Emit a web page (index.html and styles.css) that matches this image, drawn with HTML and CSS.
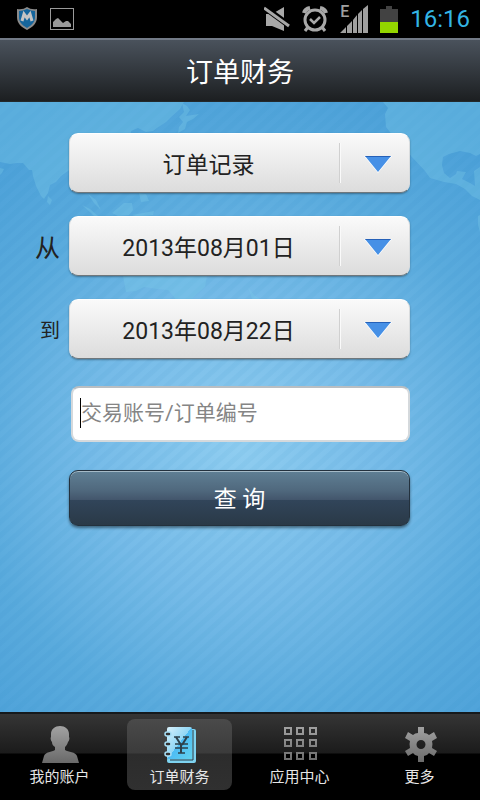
FILE: index.html
```html
<!DOCTYPE html>
<html lang="zh-CN">
<head>
    <meta charset="UTF-8">
    <meta name="viewport" content="width=device-width, initial-scale=1.0">
    <title>订单财务</title>
    <link rel="stylesheet" href="styles.css">
</head>
<body>
    <div class="status-bar">
        <div class="notifications">
            <svg width="22" height="24" viewBox="0 0 22 24">
                <path d="M1 2Q7 3 11 0Q15 3 21 2V10C21 16 17 20 11 23C5 20 1 16 1 10Z" fill="#8b8b8b"/>
                <path d="M3 4Q7 4 11 2Q15 4 19 4V10C19 15 16 18 11 21C6 18 3 15 3 10Z" fill="#15659c"/>
                <path d="M6 14L8 7L11 11L14 7L16 14" fill="none" stroke="#c4c4c4" stroke-width="3"/>
            </svg>
            <svg width="24" height="22" viewBox="0 0 24 22">
                <rect x="0.5" y="0.5" width="23" height="21" fill="none" stroke="#9a9a9a"/>
                <path d="M3 19V14L6 11L8 10L10 12L13 15L16 13L18 13L21 16V19Z" fill="#9a9a9a"/>
            </svg>
        </div>
        <div class="indicators">
            <svg width="26" height="26" viewBox="0 0 26 26">
                <path d="M2 8H8L20 1V25L8 20H2Z" fill="#a8a8a8"/>
                <path d="M0 1L26 20" stroke="#000" stroke-width="6"/>
                <path d="M0 2L25 20" stroke="#a8a8a8" stroke-width="3"/>
            </svg>
            <svg width="26" height="26" viewBox="0 0 26 26" fill="none" stroke="#a8a8a8">
                <circle cx="13" cy="14" r="10" stroke-width="3"/>
                <path d="M8 13L12 17L18 11" stroke-width="2.5"/>
                <path d="M2 7Q3 3 8 2M24 7Q23 3 18 2" stroke-width="4"/>
                <path d="M6 21L3 25M20 21L23 25" stroke-width="3"/>
            </svg>
            <div class="signal">
                <span>E</span>
                <svg width="28" height="28" viewBox="0 0 28 28" fill="#a0a0a0">
                    <path d="M0 28L6 22V28ZM7 21L12 16V28H7ZM13 15L17 10V28H13ZM18 9L22 5V28H18ZM23 4L28 0V28H23Z"/>
                </svg>
            </div>
            <svg width="18" height="27" viewBox="0 0 18 27">
                <path d="M0 3H6V0H12V3H18V16H0Z" fill="#424242"/>
                <path d="M0 16H18V27H0Z" fill="#93d500"/>
            </svg>
            <span class="clock">16:16</span>
        </div>
    </div>

    <header class="title-bar">
        <h1>订单财务</h1>
    </header>

    <main class="content">
        <svg class="map" viewBox="0 0 480 610" preserveAspectRatio="xMidYMin slice">
            <defs>
                <pattern id="stripes" width="10" height="10" patternUnits="userSpaceOnUse" patternTransform="rotate(48)">
                    <rect width="5" height="10" fill="#1c6fb4" opacity="0.05"/>
                </pattern>
            </defs>
            <rect width="480" height="610" fill="url(#stripes)"/>
            <g fill="#7bcae9" opacity="0.35">
                <path d="M0 0H184L180 7L171 15L166 20L157 26L153 29L146 30L138 26L131 29L130 40L100 55L78 62L68 69L61 74L56 80L50 83L48 91L44 97L41 94L36 84L33 74L32 68L29 68L23 61L17 61L10 62L0 60Z"/>
                <path d="M0 66L4 67L2 71L0 73ZM48 94L52 98L50 103L47 100Z"/>
                <path d="M182 1L187 4L190 8L186 14L199 12L193 17L187 20L185 27L178 31L179 25L183 20L179 15L184 10Z"/>
                <path d="M82 103L90 107L98 114L102 122L91 111ZM88 92L96 98L101 108L94 101ZM112 111L124 101L132 101L133 108L129 113L118 114ZM139 91L146 92L149 99L141 100ZM132 113L154 109L153 113L138 115Z"/>
                <path d="M123 174H207L205 185L196 193L187 203L178 201L174 195L168 188L157 187L144 185L136 189L126 190Z"/>
                <path d="M248 185L254 193L261 198L258 204L252 197Z"/>
                <path fill-rule="evenodd" d="M383 0H480V98L472 94L465 87L456 82L444 80L430 76L425 69L411 54L404 45L393 34L386 25L385 12L388 6ZM480 52L476 54L470 51L460 49L449 52L443 55L442 63L444 71L450 76L456 72L457 69L466 70L462 77L470 81L475 84L474 69L480 65Z"/>
                <path d="M478 114L480 113V130L478 123Z"/>
            </g>
        </svg>

        <form class="query-form">
            <div class="row">
                <div class="picker">
                    <select aria-label="查询类型">
                        <option>订单记录</option>
                    </select>
                    <svg class="arrow" width="28" height="18" viewBox="0 0 28 18">
                        <path d="M0 1H28L14 18Z" fill="#fff"/>
                        <path d="M1 1H27L14 17Z" fill="#4690e6"/>
                        <path d="M1 1H27L26 2H2Z" fill="#2460b8"/>
                    </svg>
                </div>
            </div>
            <div class="row">
                <label class="from" for="from">从</label>
                <div class="picker">
                    <select id="from">
                        <option>2013年08月01日</option>
                    </select>
                    <svg class="arrow" width="28" height="18" viewBox="0 0 28 18">
                        <path d="M0 1H28L14 18Z" fill="#fff"/>
                        <path d="M1 1H27L14 17Z" fill="#4690e6"/>
                        <path d="M1 1H27L26 2H2Z" fill="#2460b8"/>
                    </svg>
                </div>
            </div>
            <div class="row">
                <label for="to">到</label>
                <div class="picker">
                    <select id="to">
                        <option>2013年08月22日</option>
                    </select>
                    <svg class="arrow" width="28" height="18" viewBox="0 0 28 18">
                        <path d="M0 1H28L14 18Z" fill="#fff"/>
                        <path d="M1 1H27L14 17Z" fill="#4690e6"/>
                        <path d="M1 1H27L26 2H2Z" fill="#2460b8"/>
                    </svg>
                </div>
            </div>
            <div class="row">
                <div class="keyword">
                    <span class="caret"></span>
                    <input type="text" aria-label="交易账号/订单编号" placeholder="交易账号/订单编号">
                </div>
            </div>
            <div class="row">
                <button class="submit" type="button">查 询</button>
            </div>
        </form>
    </main>

    <nav class="tab-bar">
        <a class="tab" href="#">
            <svg width="40" height="40" viewBox="0 0 40 40">
                <defs>
                    <linearGradient id="metal" gradientUnits="userSpaceOnUse" x1="0" y1="0" x2="0" y2="40">
                        <stop offset="0" stop-color="#a4a4a4"/>
                        <stop offset="1" stop-color="#666"/>
                    </linearGradient>
                </defs>
                <path d="M20 1C25 1 29 4 29 9V12C30 13 29 16 28 17C27 20 26 21 25 22V25C28 27 36 27 37 31L39 38H2L4 31C5 27 12 27 15 25V22C13 21 12 19 12 17C11 16 10 13 11 12V9C11 4 15 1 20 1Z" fill="url(#metal)"/>
            </svg>
            <span>我的账户</span>
        </a>
        <a class="tab active" href="#">
            <svg width="40" height="40" viewBox="0 0 40 40">
                <defs>
                    <linearGradient id="book" x1="0" y1="0" x2="1" y2="1">
                        <stop offset="0" stop-color="#d9f1fb"/>
                        <stop offset="0.5" stop-color="#8ed6f5"/>
                        <stop offset="0.5" stop-color="#4dbcf4"/>
                        <stop offset="1" stop-color="#62d3ee"/>
                    </linearGradient>
                </defs>
                <path d="M9 4H34Q36 4 36 6V36Q36 38 34 38H9Q7 38 7 36Z" fill="#7ed3f0"/>
                <path d="M10 35H33V5" fill="none" stroke="#263c46"/>
                <path d="M9 2H30Q32 2 32 4V34H9Q7 34 7 32V4Q7 2 9 2Z" fill="url(#book)"/>
                <g fill="#333" stroke="#a6def5" stroke-width="1.5">
                    <rect x="5" y="7" width="6" height="4" rx="2"/>
                    <rect x="5" y="17" width="6" height="4" rx="2"/>
                    <rect x="5" y="27" width="6" height="4" rx="2"/>
                </g>
                <path d="M14 12H20M23 12H29M15 19H28M15 23H28M18 28H25M22 12" fill="none" stroke="#2d414b" stroke-width="1.5"/>
                <path d="M16 12L21 20V28M27 12L22 20" fill="none" stroke="#2d414b" stroke-width="2"/>
            </svg>
            <span>订单财务</span>
        </a>
        <a class="tab" href="#">
            <svg width="40" height="40" viewBox="0 0 40 40" fill="none" stroke="url(#metal)" stroke-width="2">
                <path d="M5 3H11V9H5ZM17 3H23V9H17ZM30 3H36V9H30ZM5 15H11V21H5ZM17 15H23V21H17ZM30 15H36V21H30ZM5 28H11V34H5ZM17 28H23V34H17ZM30 28H36V34H30Z"/>
            </svg>
            <span>应用中心</span>
        </a>
        <a class="tab" href="#">
            <svg width="40" height="40" viewBox="0 0 40 40">
                <path fill="url(#metal)" fill-rule="evenodd" d="M18 2H24V8Q27 8 29 10L34 7L37 13L32 16Q33 19 32 23L37 26L34 31L29 28Q27 31 24 31V37H18V31Q15 31 13 28L8 31L5 26L10 23Q9 19 10 16L5 13L8 7L13 10Q15 8 18 8ZM21 15A4 4 0 1 0 21 24A4 4 0 1 0 21 15Z"/>
            </svg>
            <span>更多</span>
        </a>
    </nav>
</body>
</html>
```

FILE: styles.css
```css
* {
    box-sizing: border-box;
}
body {
    margin: 0;
    min-height: 100vh;
    display: flex;
    flex-direction: column;
    font-family: Roboto, "Noto Sans CJK SC", sans-serif;
    background-color: #000;
    color: #222;
}
svg {
    display: block;
}

.status-bar {
    height: 38px;
    display: flex;
    justify-content: space-between;
    align-items: center;
    padding: 0 10px 0 16px;
    background-color: #000;
}
.notifications, .indicators {
    display: flex;
    align-items: center;
    gap: 12px;
}
.signal {
    display: grid;
}
.signal > * {
    grid-area: 1 / 1;
}
.signal span {
    font-size: 16px;
    font-weight: 500;
    line-height: 14px;
    color: #a0a0a0;
}
.clock {
    font-size: 24px;
    color: #33b5e5;
}

.title-bar {
    height: 64px;
    display: flex;
    align-items: center;
    justify-content: center;
    border-top: 2px solid #727a86;
    border-bottom: 1px solid #23292c;
    background: linear-gradient(#4a525c, #1c1f21);
}
.title-bar h1 {
    margin: 0;
    font-size: 27px;
    font-weight: normal;
    color: #fff;
}

.content {
    flex: 1;
    display: grid;
    background: radial-gradient(circle at 50% 57%, #8fcdf0 0, #76bbe8 150px, #5aabdd 270px, #4a9fd8 400px);
}
.map, .query-form {
    grid-area: 1 / 1;
}
.map {
    width: 100%;
    height: 100%;
}
.query-form {
    display: flex;
    flex-direction: column;
    gap: 23px;
    padding: 31px 70px 40px 34px;
}
.row {
    display: grid;
    grid-template-columns: 26px 1fr;
    column-gap: 9px;
    align-items: center;
}
.row > :last-child {
    grid-column: 2;
}
.row label {
    font-size: 20px;
    text-align: right;
}
.row .from {
    font-size: 25px;
}
.picker {
    display: grid;
    align-items: center;
}
.picker > * {
    grid-area: 1 / 1;
}
.picker::after {
    content: "";
    grid-area: 1 / 1;
    justify-self: end;
    width: 2px;
    height: 40px;
    margin-right: 69px;
    background: linear-gradient(to right, #d0d0d0 50%, #fafafa 50%);
    pointer-events: none;
}
.picker select {
    width: 100%;
    height: 60px;
    padding: 4px 62px 0 0;
    appearance: none;
    border: 1px solid #d9dcde;
    border-top-color: #fff;
    border-bottom-color: #6f777c;
    border-radius: 9px;
    background: linear-gradient(#fafafa, #dcdcdc);
    box-shadow: 0 1px 2px rgba(0, 0, 0, 0.35);
    font: inherit;
    font-size: 23px;
    color: #222;
    text-align: center;
    text-align-last: center;
}
.arrow {
    justify-self: end;
    margin: 2px 18px 0 0;
    pointer-events: none;
}
.keyword {
    height: 56px;
    display: flex;
    align-items: center;
    margin: 4px 0 5px 2px;
    padding: 0 7px 3px;
    border: 2px solid #d5d9dc;
    border-top-color: #b9bec2;
    border-radius: 8px;
    background-color: #fff;
}
.caret {
    width: 1px;
    height: 30px;
    background-color: #000;
}
.keyword input {
    flex: 1;
    min-width: 0;
    padding: 0;
    border: 0;
    outline: 0;
    background: none;
    font: inherit;
    font-size: 21px;
}
.keyword input::placeholder {
    color: #858585;
}
.submit {
    height: 56px;
    padding: 0 0 2px;
    border: 1px solid #23313d;
    border-radius: 9px;
    background: linear-gradient(#5f7f94, #50697e 35%, #43566c 53%, #31455a 54%, #2a3947);
    box-shadow: 0 2px 3px rgba(0, 0, 0, 0.45), inset 0 1px 0 #a5bac7;
    font: inherit;
    font-size: 23px;
    color: #fff;
}

.tab-bar {
    height: 88px;
    display: grid;
    grid-template-columns: repeat(4, 1fr);
    border-top: 2px solid #15191c;
    background: linear-gradient(#353535, #1b1b1b 39px, #000 40px);
}
.tab {
    display: flex;
    flex-direction: column;
    align-items: center;
    margin: 5px 8px 10px 7px;
    padding-top: 6px;
    border-radius: 8px;
    font-size: 15px;
    line-height: 24px;
    color: #e6e6e6;
    text-decoration: none;
}
.tab.active {
    background: linear-gradient(#4a4a4a, #3b3b3b 34px, #2c2c2c 35px, #303030);
}
```
